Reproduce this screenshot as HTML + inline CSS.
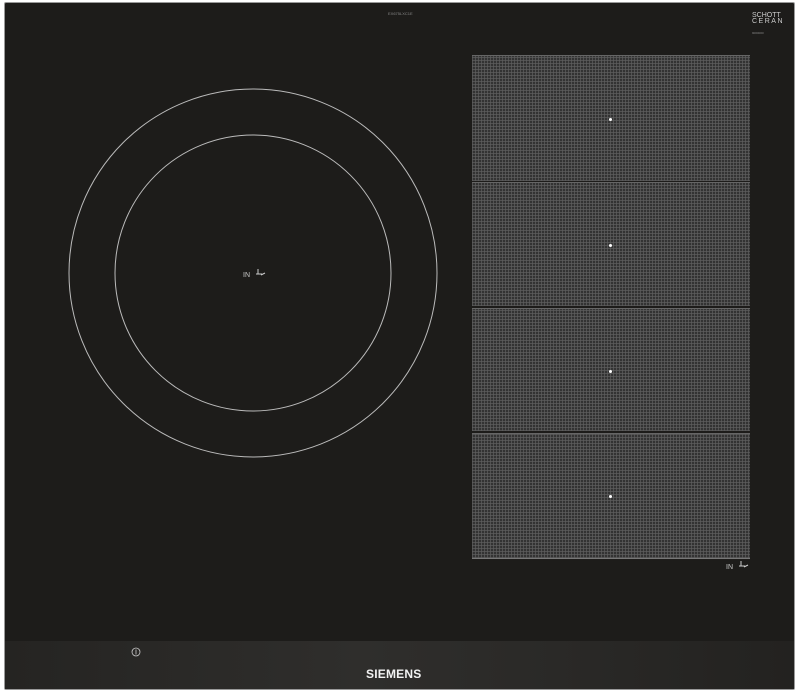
<!DOCTYPE html>
<html><head><style>
html,body{margin:0;padding:0;background:#fff;width:800px;height:695px;overflow:hidden;font-family:"Liberation Sans",sans-serif}
.board{position:absolute;left:4px;top:2px;width:791px;height:688px;background:#1d1c1a;border:1px solid #9a9a9a;box-sizing:border-box;border-radius:2px}
.strip{position:absolute;left:5px;top:641px;width:789px;height:48px;background:linear-gradient(90deg,#252422,#2f2e2c 45%,#2a2927 70%,#232220)}
.zone{position:absolute;left:472px;width:278px;background-color:#333;
background-image:repeating-linear-gradient(90deg,rgba(95,95,95,.7) 0 1px,transparent 1px 3px),repeating-linear-gradient(0deg,rgba(95,95,95,.7) 0 1px,transparent 1px 3px);border-top:1px solid #666}
.dot{position:absolute;width:3px;height:3px;background:#fff;border-radius:50%;left:137px}
.t{position:absolute;color:#ddd}
</style></head><body>
<div class="board"></div>
<div class="strip"></div>
<div class="t" style="left:388px;top:11px;font-size:4px;color:#888">EX675LXC1E</div>
<div class="t" style="left:752px;top:13px;font-size:7px;line-height:6px;color:#ccc">SCHOTT<br><span style="letter-spacing:1.5px">CERAN</span></div>
<div class="t" style="left:752px;top:31px;font-size:3px;color:#888">9000000</div>
<svg width="800" height="695" style="position:absolute;left:0;top:0">
<circle cx="253" cy="273" r="184" fill="none" stroke="#bbb" stroke-width="1"/>
<circle cx="253" cy="273" r="138" fill="none" stroke="#bbb" stroke-width="1"/>
<text x="243" y="277" font-size="7" fill="#ccc" font-family="Liberation Sans">IN</text>
<path d="M258 269v5h-2h6M261 275l4-2" stroke="#ccc" stroke-width="1" fill="none"/>
<text x="726" y="569" font-size="7" fill="#ccc" font-family="Liberation Sans">IN</text>
<path d="M741 561v5h-2h6M744 567l4-2" stroke="#ccc" stroke-width="1" fill="none"/>
<circle cx="136" cy="652" r="4" fill="none" stroke="#ccc" stroke-width="0.8"/>
<line x1="136" y1="649.5" x2="136" y2="654.5" stroke="#ccc" stroke-width="0.8"/>
</svg>
<div class="zone" style="top:55px;height:125px"><div class="dot" style="top:62px"></div></div>
<div class="zone" style="top:182px;height:123px"><div class="dot" style="top:61px"></div></div>
<div class="zone" style="top:308px;height:122px"><div class="dot" style="top:61px"></div></div>
<div class="zone" style="top:433px;height:124px;border-bottom:1px solid #777"><div class="dot" style="top:61px"></div></div>
<div class="t" style="left:366px;top:667px;font-size:12px;font-weight:bold;color:#f2f2f2;letter-spacing:0.2px">SIEMENS</div>
</body></html>
